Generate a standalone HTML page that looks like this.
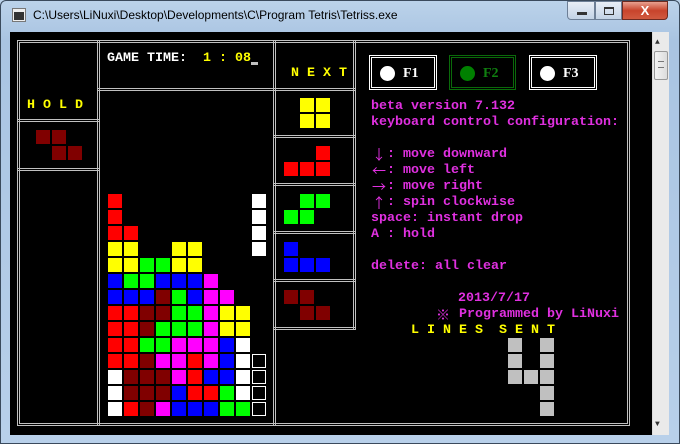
<!DOCTYPE html>
<html><head><meta charset="utf-8"><style>
*{margin:0;padding:0;box-sizing:border-box}
body{width:680px;height:444px;overflow:hidden;position:relative;background:linear-gradient(#bcd3ea,#a9c4e2 40px,#b8d0ea);font-family:"Liberation Mono",monospace}
.abs{position:absolute}
.t{position:absolute;font-family:"Liberation Mono","Noto Sans CJK SC",monospace;font-weight:bold;font-size:13.33px;line-height:16px;white-space:pre}
.w{display:inline-block;width:16px;text-align:center;font-weight:normal;font-family:"Noto Sans CJK SC",sans-serif;font-size:14px;line-height:16px;vertical-align:top}
.c{position:absolute;width:14px;height:14px}
.h{position:absolute;height:3px;border-top:3px double #c0c0c0}
.v{position:absolute;width:3px;border-left:3px double #c0c0c0}
.m{color:#e030e0}
.y{color:#ffff00}
</style></head><body>
<div class="abs" style="left:0;top:0;width:680px;height:444px;border:1px solid #3a4a5c;border-radius:6px 6px 0 0"></div>
<div class="abs" style="left:12px;top:8px;width:14px;height:14px;background:#eee;border:1px solid #777"><div class="abs" style="left:1px;top:3px;width:10px;height:8px;background:#333"></div></div>
<div class="abs" style="left:33px;top:8px;font-family:'Liberation Sans',sans-serif;font-size:12px;color:#000;white-space:pre">C:\Users\LiNuxi\Desktop\Developments\C\Program Tetris\Tetriss.exe</div>
<div class="abs" style="left:567px;top:1px;width:28px;height:19px;background:linear-gradient(#e8eef6,#c3d3e6);border:1px solid #6d7f96;border-radius:0 0 0 4px"><div class="abs" style="left:9px;top:10px;width:10px;height:3px;background:#333"></div></div>
<div class="abs" style="left:595px;top:1px;width:27px;height:19px;background:linear-gradient(#e8eef6,#c3d3e6);border:1px solid #6d7f96"><div class="abs" style="left:8px;top:5px;width:10px;height:8px;border:1px solid #333;border-top-width:2px"></div></div>
<div class="abs" style="left:622px;top:1px;width:46px;height:19px;background:linear-gradient(#e8a090,#c8442c 50%,#d05a40);border:1px solid #6d2a20;border-radius:0 0 4px 0;color:#fff;font-family:'Liberation Sans',sans-serif;font-weight:bold;font-size:13px;text-align:center;line-height:17px">X</div>
<div class="abs" style="left:10px;top:32px;width:642px;height:403px;background:#000"></div>
<div class="abs" style="left:652px;top:32px;width:17px;height:403px;background:#eaeaea;border-left:1px solid #ddd"></div>
<div class="abs" style="left:655px;top:38px;color:#333;font-size:8px">▲</div>
<div class="abs" style="left:654px;top:51px;width:14px;height:29px;background:linear-gradient(90deg,#f4f4f4,#dcdcdc);border:1px solid #999;border-radius:2px"></div>
<div class="abs" style="left:658px;top:61px;width:6px;height:7px;border-top:1px solid #777;border-bottom:1px solid #777"></div>
<div class="abs" style="left:655px;top:420px;color:#333;font-size:8px">▼</div>

<div class="abs" style="left:17px;top:40px;width:613px;height:386px;border:3px double #c0c0c0"></div>
<div class="v" style="left:97px;top:40px;height:386px"></div>
<div class="v" style="left:273px;top:40px;height:386px"></div>
<div class="v" style="left:353px;top:40px;height:290px"></div>
<div class="h" style="left:97px;top:88px;width:258px"></div>
<div class="h" style="left:17px;top:119px;width:82px"></div>
<div class="h" style="left:17px;top:168px;width:82px"></div>
<div class="h" style="left:273px;top:135px;width:82px"></div>
<div class="h" style="left:273px;top:183px;width:82px"></div>
<div class="h" style="left:273px;top:231px;width:82px"></div>
<div class="h" style="left:273px;top:279px;width:82px"></div>
<div class="h" style="left:273px;top:327px;width:82px"></div>

<div class="t" style="left:107px;top:51px;color:#fff">GAME TIME:  <span class="y">1 : 08</span></div>
<div class="abs" style="left:251px;top:62px;width:7px;height:3px;background:#c0c0c0"></div>
<div class="t y" style="left:27px;top:98px">H O L D</div>
<div class="t y" style="left:291px;top:66px">N E X T</div>

<div class="abs" style="left:369px;top:55px;width:68px;height:35px;border:3px double #fff"></div>
<div class="abs" style="left:380px;top:66px;width:15px;height:15px;border-radius:50%;background:#fff"></div>
<div class="t" style="left:403px;top:66px;color:#fff;font-family:'Liberation Serif',serif;font-size:14px">F1</div>
<div class="abs" style="left:449px;top:55px;width:67px;height:35px;border:3px double #0a6a0a"></div>
<div class="abs" style="left:460px;top:66px;width:15px;height:15px;border-radius:50%;background:#008000"></div>
<div class="t" style="left:483px;top:66px;color:#108010;font-family:'Liberation Serif',serif;font-size:14px">F2</div>
<div class="abs" style="left:529px;top:55px;width:68px;height:35px;border:3px double #fff"></div>
<div class="abs" style="left:540px;top:66px;width:15px;height:15px;border-radius:50%;background:#fff"></div>
<div class="t" style="left:563px;top:66px;color:#fff;font-family:'Liberation Serif',serif;font-size:14px">F3</div>

<div class="t m" style="left:371px;top:99px">beta version 7.132
keyboard control configuration:

<span class="w">↓</span>: move downward
<span class="w">←</span>: move left
<span class="w">→</span>: move right
<span class="w">↑</span>: spin clockwise
space: instant drop
A : hold

delete: all clear</div>
<div class="t m" style="left:458px;top:291px">2013/7/17</div>
<div class="t m" style="left:435px;top:307px"><span class="w">※</span> Programmed by LiNuxi</div>
<div class="t y" style="left:411px;top:323px">L I N E S  S E N T</div>

<div id="cells"></div>
<script>
var C={R:'#ff0000',Y:'#ffff00',G:'#00ff00',B:'#0000ff',M:'#ff00ff',D:'#800000',W:'#ffffff',S:'#c0c0c0'};
var h='';
function cell(x,y,k){if(k=='O'){h+='<div class="c" style="left:'+x+'px;top:'+y+'px;border:1px solid #fff"></div>';return;}
h+='<div class="c" style="left:'+x+'px;top:'+y+'px;background:'+C[k]+'"></div>';}
var g=["R........W","R........W","RR.......W","YY..YY...W","YYGGYY....","BGGBBBM...","BBBDGBMM..","RRDDGGMYY.","RRDGGGMYY.","RRGGMMMBW.","RRDMMRMBWO","WDDDMRBBWO","WDDDBRRGWO","WRDMBBBGGO"];
for(var r=0;r<14;r++)for(var c=0;c<10;c++){var k=g[r][c];if(k!='.')cell(108+c*16,194+r*16,k);}
[[36,130],[52,130],[52,146],[68,146]].forEach(function(p){cell(p[0],p[1],'D')});
[[300,98],[316,98],[300,114],[316,114]].forEach(function(p){cell(p[0],p[1],'Y')});
[[316,146],[284,162],[300,162],[316,162]].forEach(function(p){cell(p[0],p[1],'R')});
[[300,194],[316,194],[284,210],[300,210]].forEach(function(p){cell(p[0],p[1],'G')});
[[284,242],[284,258],[300,258],[316,258]].forEach(function(p){cell(p[0],p[1],'B')});
[[284,290],[300,290],[300,306],[316,306]].forEach(function(p){cell(p[0],p[1],'D')});
[[508,338],[508,354],[508,370],[524,370],[540,338],[540,354],[540,370],[540,386],[540,402]].forEach(function(p){cell(p[0],p[1],'S')});
document.getElementById('cells').innerHTML=h;
</script>
</body></html>
